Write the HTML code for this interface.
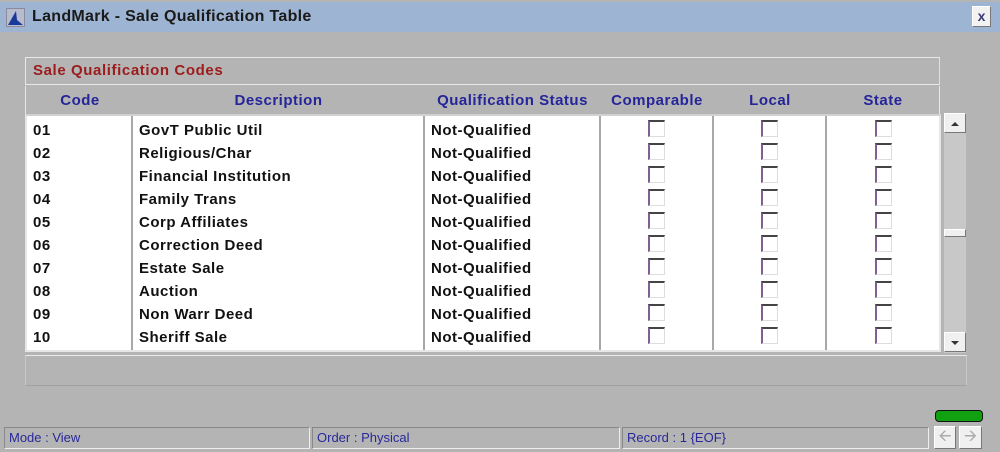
<!DOCTYPE html>
<html><head><style>
*{margin:0;padding:0;box-sizing:border-box}
body{width:1000px;height:452px;background:#b4b4b4;font-family:"Liberation Sans",sans-serif;position:relative;overflow:hidden}
.a{position:absolute}
.title{left:0;top:2px;width:1000px;height:30px;background:#9db5d3}
.tt{left:32px;top:8px;font-size:16px;font-weight:bold;color:#1a1a1a;letter-spacing:0.3px}
.close{left:972px;top:6px;width:19px;height:21px;background:#f2f2f2;border:1px solid #fff;border-right-color:#777;border-bottom-color:#777;font-size:14px;font-weight:bold;color:#3a3a7a;text-align:center;line-height:19px}
.grp{left:25px;top:57px;width:915px;height:28px;border:1px solid #e8e8e8;border-right-color:#e0e0e0}
.gt{left:33px;top:62px;font-size:15px;font-weight:bold;color:#9c1c1c;letter-spacing:0.6px}
.hdr{top:92px;font-size:15px;font-weight:bold;color:#25259a;text-align:center;letter-spacing:0.5px}
.hl{left:25px;top:86px;width:915px;height:28px;border-left:1px solid #e8e8e8;border-right:1px solid #e8e8e8}
.grid{left:25px;top:114px;width:916px;height:238px;background:#fff;border:2px solid #e6e6e6;border-top-color:#d0d0d0}
.vl{top:116px;width:2px;height:234px;background:#a8a8a8}
.cell{font-size:15px;font-weight:bold;color:#111;height:23px;line-height:23px;letter-spacing:0.5px}
.cb{width:17px;height:17px;border:1px solid #ddd;border-top:2px solid #444;border-left:2px solid #806090;background:#fff}
.sb{left:944px;top:113px;width:22px;height:240px;background:#c8c8c8}
.btn{background:#f0f0f0;border:1px solid #fff;border-right-color:#777;border-bottom-color:#777}
.st{top:427px;height:22px;border:1px solid #888;border-right-color:#eee;border-bottom-color:#eee;font-size:13px;color:#28289a;padding:2px 0 0 4px}
</style></head><body>
<div class="a title"></div>
<svg class="a" style="left:6px;top:8px" width="19" height="19"><rect width="19" height="19" fill="#8a8a9a"/><rect x="1" y="1" width="17" height="17" fill="#b8bcd0"/><path d="M2 17 L10 3 L11 12 L17 17Z" fill="#1a3a9a"/></svg>
<div class="a tt">LandMark - Sale Qualification Table</div>
<div class="a close">x</div>
<div class="a grp"></div>
<div class="a gt">Sale Qualification Codes</div>
<div class="a hl"></div>
<div class="a hdr" style="left:28px;width:104px">Code</div>
<div class="a hdr" style="left:133px;width:291px">Description</div>
<div class="a hdr" style="left:425px;width:175px">Qualification Status</div>
<div class="a hdr" style="left:601px;width:112px">Comparable</div>
<div class="a hdr" style="left:714px;width:112px">Local</div>
<div class="a hdr" style="left:827px;width:112px">State</div>
<div class="a grid"></div>
<div class="a vl" style="left:131px"></div>
<div class="a vl" style="left:423px"></div>
<div class="a vl" style="left:599px"></div>
<div class="a vl" style="left:712px"></div>
<div class="a vl" style="left:825px"></div>
<div class="a" style="left:33px;top:119px">
<div class="cell">01</div><div class="cell">02</div><div class="cell">03</div><div class="cell">04</div><div class="cell">05</div><div class="cell">06</div><div class="cell">07</div><div class="cell">08</div><div class="cell">09</div><div class="cell">10</div></div>
<div class="a" style="left:139px;top:119px">
<div class="cell">GovT Public Util</div><div class="cell">Religious/Char</div><div class="cell">Financial Institution</div><div class="cell">Family Trans</div><div class="cell">Corp Affiliates</div><div class="cell">Correction Deed</div><div class="cell">Estate Sale</div><div class="cell">Auction</div><div class="cell">Non Warr Deed</div><div class="cell">Sheriff Sale</div></div>
<div class="a" style="left:431px;top:119px">
<div class="cell">Not-Qualified</div><div class="cell">Not-Qualified</div><div class="cell">Not-Qualified</div><div class="cell">Not-Qualified</div><div class="cell">Not-Qualified</div><div class="cell">Not-Qualified</div><div class="cell">Not-Qualified</div><div class="cell">Not-Qualified</div><div class="cell">Not-Qualified</div><div class="cell">Not-Qualified</div></div>
<div id="cbs"></div>
<script>
var h='';[648,761,875].forEach(function(x){for(var i=0;i<10;i++){h+='<div class="a cb" style="left:'+x+'px;top:'+(120+i*23)+'px"></div>'}});
document.getElementById('cbs').innerHTML=h;
</script>
<div class="a sb"></div>
<div class="a btn" style="left:944px;top:113px;width:22px;height:20px"><svg width="20" height="18"><path d="M6 12 L10 8 L14 12Z" fill="#333"/></svg></div>
<div class="a btn" style="left:944px;top:229px;width:22px;height:8px"></div>
<div class="a btn" style="left:944px;top:332px;width:22px;height:20px"><svg width="20" height="18"><path d="M6 8 L10 12 L14 8Z" fill="#333"/></svg></div>
<div class="a" style="left:25px;top:355px;width:942px;height:31px;border:1px solid #c8c8c8;border-top-color:#eaeaea;border-bottom-color:#a0a0a0"></div>
<div class="a st" style="left:4px;width:306px">Mode : View</div>
<div class="a st" style="left:312px;width:308px">Order : Physical</div>
<div class="a st" style="left:622px;width:307px">Record : 1 {EOF}</div>
<div class="a" style="left:935px;top:410px;width:48px;height:12px;background:#10a010;border:1px solid #111;border-radius:4px"></div>
<div class="a btn" style="left:934px;top:426px;width:22px;height:23px;text-align:center;color:#aaa;font-size:16px;line-height:20px">&#129128;</div>
<div class="a btn" style="left:959px;top:426px;width:23px;height:23px;text-align:center;color:#aaa;font-size:16px;line-height:20px">&#129130;</div>
</body></html>
